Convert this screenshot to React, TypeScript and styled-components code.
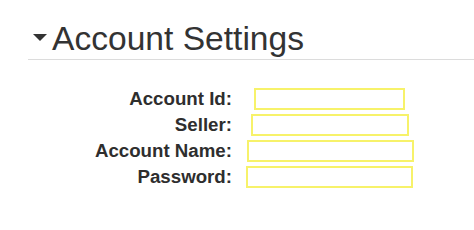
import React from 'react';
import styled, { createGlobalStyle } from 'styled-components';

const GlobalStyle = createGlobalStyle`
  html, body {
    margin: 0;
    padding: 0;
    background: #ffffff;
    font-family: "Liberation Sans", Arial, Helvetica, sans-serif;
  }
`;

const Page = styled.div`
  width: 474px;
  height: 230px;
  overflow: hidden;
`;

const Header = styled.div`
  display: flex;
  align-items: center;
  margin-left: 28px;
  padding-top: 20px;
  padding-bottom: 1px;
  border-bottom: 1px solid #dcdcdc;
`;

const Caret = styled.span`
  width: 0;
  height: 0;
  margin-left: 5px;
  margin-right: 5px;
  margin-top: -4px;
  border-left: 7px solid transparent;
  border-right: 7px solid transparent;
  border-top: 7px solid #333333;
`;

const Title = styled.h1`
  margin: 0;
  font-size: 33.6px;
  line-height: 38px;
  font-weight: normal;
  color: #333333;
`;

const Form = styled.div`
  display: grid;
  grid-template-columns: 232px 1fr;
  grid-auto-rows: 26px;
  margin-top: 26px;
`;

const Label = styled.label`
  text-align: right;
  font-size: 18.7px;
  line-height: 26px;
  font-weight: bold;
  color: #2e2e2e;
`;

const Field = styled.div<{ $inset: number; $width: number }>`
  align-self: center;
  box-sizing: border-box;
  height: 22px;
  margin-left: ${(p) => p.$inset}px;
  width: ${(p) => p.$width}px;
  border: 2px solid #f7f26a;
  background: #ffffff;
`;

const rows = [
  { label: 'Account Id:', inset: 22, width: 151 },
  { label: 'Seller:', inset: 19, width: 158 },
  { label: 'Account Name:', inset: 15, width: 167 },
  { label: 'Password:', inset: 14, width: 167 },
];

const App: React.FC = () => {
  return (
    <Page>
      <GlobalStyle />
      <Header>
        <Caret />
        <Title>Account Settings</Title>
      </Header>
      <Form>
        {rows.map((row) => (
          <React.Fragment key={row.label}>
            <Label>{row.label}</Label>
            <Field $inset={row.inset} $width={row.width} />
          </React.Fragment>
        ))}
      </Form>
    </Page>
  );
};

export default App;
